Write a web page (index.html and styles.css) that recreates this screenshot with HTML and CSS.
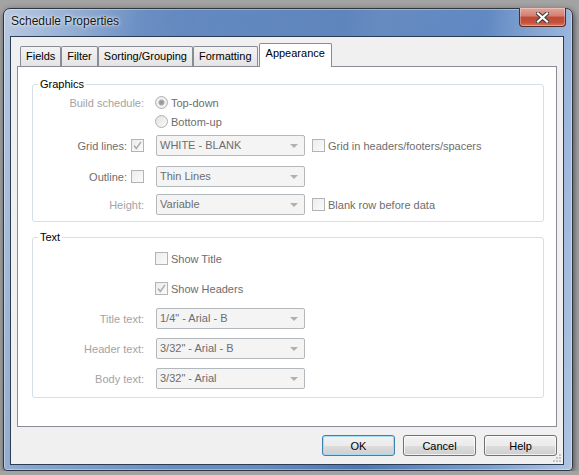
FILE: index.html
```html
<!DOCTYPE html>
<html lang="en">
<head>
    <meta charset="UTF-8">
    <title>Schedule Properties</title>
    <link rel="stylesheet" href="styles.css">
</head>
<body>
    <div class="window">
        <div class="titlebar">
            <span class="title">Schedule Properties</span>
            <div class="close-btn">
                <svg width="13" height="11" viewBox="0 0 13 11">
                    <path d="M2 1.5 L11 9.5 M11 1.5 L2 9.5" stroke="#3c3c3c" stroke-width="4.2" stroke-linecap="square"/>
                    <path d="M2 1.5 L11 9.5 M11 1.5 L2 9.5" stroke="#ffffff" stroke-width="2.2" stroke-linecap="square"/>
                </svg>
            </div>
        </div>

        <div class="client">
            <div class="tabs">
                <div class="tab">Fields</div>
                <div class="tab">Filter</div>
                <div class="tab">Sorting/Grouping</div>
                <div class="tab">Formatting</div>
                <div class="tab active">Appearance</div>
            </div>

            <div class="tab-panel">
                <!-- Graphics group -->
                <fieldset class="group graphics">
                    <legend>Graphics</legend>
                    <div class="row">
                        <div class="lbl dim">Build schedule:</div>
                        <div class="opt"><span class="radio checked"></span>Top-down</div>
                    </div>
                    <div class="row">
                        <div class="lbl"></div>
                        <div class="opt"><span class="radio"></span>Bottom-up</div>
                    </div>
                    <div class="row combo-row row-gridlines">
                        <div class="lbl">Grid lines:
                            <span class="check">
                                <svg width="11" height="11" viewBox="0 0 11 11"><path d="M2 5.5 L4.3 8.5 L9 1.8" fill="none" stroke="#a9a9a9" stroke-width="1.4"/></svg>
                            </span>
                        </div>
                        <div class="combo">WHITE - BLANK<span class="arrow"></span></div>
                        <div class="opt extra"><span class="check"></span>Grid in headers/footers/spacers</div>
                    </div>
                    <div class="row combo-row row-outline">
                        <div class="lbl">Outline: <span class="check"></span></div>
                        <div class="combo">Thin Lines<span class="arrow"></span></div>
                    </div>
                    <div class="row combo-row row-height">
                        <div class="lbl dim">Height:</div>
                        <div class="combo">Variable<span class="arrow"></span></div>
                        <div class="opt extra"><span class="check"></span>Blank row before data</div>
                    </div>
                </fieldset>

                <!-- Text group -->
                <fieldset class="group text">
                    <legend>Text</legend>
                    <div class="row row-title">
                        <div class="lbl"></div>
                        <div class="opt"><span class="check"></span>Show Title</div>
                    </div>
                    <div class="row row-headers">
                        <div class="lbl"></div>
                        <div class="opt">
                            <span class="check">
                                <svg width="11" height="11" viewBox="0 0 11 11"><path d="M2 5.5 L4.3 8.5 L9 1.8" fill="none" stroke="#a9a9a9" stroke-width="1.4"/></svg>
                            </span>Show Headers
                        </div>
                    </div>
                    <div class="row combo-row row-font first">
                        <div class="lbl dim">Title text:</div>
                        <div class="combo">1/4" - Arial - B<span class="arrow"></span></div>
                    </div>
                    <div class="row combo-row row-font">
                        <div class="lbl dim">Header text:</div>
                        <div class="combo">3/32" - Arial - B<span class="arrow"></span></div>
                    </div>
                    <div class="row combo-row row-font">
                        <div class="lbl dim">Body text:</div>
                        <div class="combo">3/32" - Arial<span class="arrow"></span></div>
                    </div>
                </fieldset>
            </div>

            <div class="buttons">
                <button class="button default">OK</button>
                <button class="button">Cancel</button>
                <button class="button">Help</button>
            </div>

            <!-- resize grip -->
            <svg class="grip" width="10" height="10" viewBox="0 0 10 10">
                <rect x="7" y="1" width="2" height="2" fill="#c4c4c4"/>
                <rect x="4" y="4" width="2" height="2" fill="#c4c4c4"/>
                <rect x="7" y="4" width="2" height="2" fill="#c4c4c4"/>
                <rect x="1" y="7" width="2" height="2" fill="#c4c4c4"/>
                <rect x="4" y="7" width="2" height="2" fill="#c4c4c4"/>
                <rect x="7" y="7" width="2" height="2" fill="#c4c4c4"/>
            </svg>
        </div>
    </div>
</body>
</html>
```

FILE: styles.css
```css
* {
    box-sizing: border-box;
}

body {
    margin: 0;
    background-color: #a3a3a3;
    font-family: "Liberation Sans", Arial, sans-serif;
    font-size: 11px;
    color: #000;
}

/* Aero style window frame */
.window {
    width: 570px;
    height: 463px;
    margin: 8px 0 0 3px;
    padding: 0 8px 5px 6px;
    border: 1px solid #30363f;
    border-radius: 7px 7px 4px 4px;
    display: flex;
    flex-direction: column;
    background:
        linear-gradient(105deg, rgba(255,255,255,0.4) 0%, rgba(255,255,255,0.05) 20%, rgba(255,255,255,0.12) 55%, rgba(255,255,255,0) 70%, rgba(255,255,255,0.3) 100%),
        linear-gradient(to right, #8aa6ce 0%, #5a82bd 30%, #4c76b5 60%, #6189c3 85%, #8eacd7 100%);
    box-shadow: inset 0 0 0 1px rgba(255,255,255,0.35), 1px 2px 6px rgba(0,0,0,0.55);
}

.titlebar {
    height: 27px;
    display: flex;
    justify-content: space-between;
    align-items: flex-start;
}

.title {
    margin: 5px 0 0 1px;
    font-size: 12px;
    line-height: 15px;
    color: #141414;
    text-shadow: 0 0 5px rgba(255,255,255,0.9), 0 0 2px rgba(255,255,255,0.9);
}

.close-btn {
    width: 47px;
    height: 19px;
    margin: -1px -2px 0 0;
    border: 1px solid #5b2a24;
    border-top: none;
    border-radius: 0 0 4px 4px;
    display: flex;
    align-items: center;
    justify-content: center;
    background: linear-gradient(#e2a69c 0%, #d47d6f 45%, #bf4a36 50%, #c4503b 80%, #d77a5d 100%);
    box-shadow: inset 0 0 0 1px rgba(255,255,255,0.3);
}

.client {
    flex: 1;
    position: relative;
    display: flex;
    flex-direction: column;
    padding: 6px 6px 8px 6px;
    background-color: #f0f0f0;
    border: 1px solid #2b3c55;
}

/* Tabs */
.tabs {
    height: 23px;
    display: flex;
    align-items: flex-end;
    padding-left: 3px;
}

.tab {
    height: 20px;
    padding: 0 5px;
    line-height: 19px;
    border: 1px solid #898c95;
    border-bottom: none;
    border-radius: 2px 2px 0 0;
    background: linear-gradient(#f3f3f3, #e4e4e4);
}

.tab.active {
    position: relative;
    z-index: 1;
    height: 24px;
    margin: 0 0 -1px 1px;
    padding: 0 6px;
    line-height: 19px;
    background: #fff;
}

.tab-panel {
    flex: 1;
    padding: 11px 12px 0 14px;
    background: #fff;
    border: 1px solid #898c95;
}

/* Group boxes */
.group {
    margin: 0;
    padding: 2px 0 6px 0;
    min-width: 0;
    border: 1px solid #d5dfe5;
    border-radius: 3px;
}

.group legend {
    margin-left: 5px;
    padding: 0 2px;
    line-height: 13px;
}

.group.text {
    margin-top: 9px;
    padding: 5px 0 8px 0;
}

.row {
    display: flex;
    align-items: center;
    height: 19px;
}

.combo-row {
    height: 21px;
}

.row-gridlines { margin-top: 4px; }
.row-outline { margin-top: 10px; }
.row-height { margin-top: 7px; }
.row-headers { margin-top: 11px; }
.row-font { margin-top: 9px; }
.row-font.first { margin-top: 10px; }

.lbl {
    width: 111px;
    margin-right: 11px;
    display: flex;
    align-items: center;
    justify-content: flex-end;
    gap: 4px;
    color: #6d6d6d;
    white-space: nowrap;
}

.lbl.dim {
    color: #a3a3a3;
}

.opt {
    display: flex;
    align-items: center;
    gap: 3px;
    color: #6d6d6d;
    white-space: nowrap;
}

.opt.extra {
    margin-left: 7px;
}

/* Disabled controls */
.check {
    width: 13px;
    height: 13px;
    flex: none;
    display: flex;
    align-items: center;
    justify-content: center;
    border: 1px solid #b4b4b4;
    background: linear-gradient(135deg, #ececec, #fbfbfb);
}

.radio {
    width: 13px;
    height: 13px;
    flex: none;
    border-radius: 50%;
    border: 1px solid #b1b1b1;
    background: linear-gradient(135deg, #e2e2e2, #fafafa);
}

.radio.checked {
    background: radial-gradient(circle, #8f8f8f 0, #a9a9a9 2.5px, #f4f4f4 3.5px, #e8e8e8 6px);
}

.combo {
    position: relative;
    width: 149px;
    height: 21px;
    margin-left: 1px;
    padding-left: 3px;
    line-height: 19px;
    color: #6d6d6d;
    border: 1px solid #b3b8bc;
    border-radius: 2px;
    background: #f4f4f4;
    white-space: nowrap;
}

.combo .arrow {
    position: absolute;
    right: 6px;
    top: 8px;
    border-left: 4px solid transparent;
    border-right: 4px solid transparent;
    border-top: 4px solid #b0b0b0;
}

/* Dialog buttons */
.buttons {
    margin-top: 8px;
    display: flex;
    justify-content: flex-end;
    gap: 8px;
}

.button {
    width: 73px;
    height: 21px;
    padding: 0;
    font-family: "Liberation Sans", Arial, sans-serif;
    font-size: 11px;
    color: #000;
    border: 1px solid #707070;
    border-radius: 3px;
    background: linear-gradient(#f2f2f2 0%, #ebebeb 50%, #dddddd 51%, #cfcfcf 100%);
    box-shadow: inset 0 0 0 1px rgba(255,255,255,0.7);
}

.button.default {
    border-color: #3c7fb1;
    box-shadow: inset 0 0 0 1px #a6dcf5;
}

.grip {
    position: absolute;
    right: 1px;
    bottom: 1px;
}
```
